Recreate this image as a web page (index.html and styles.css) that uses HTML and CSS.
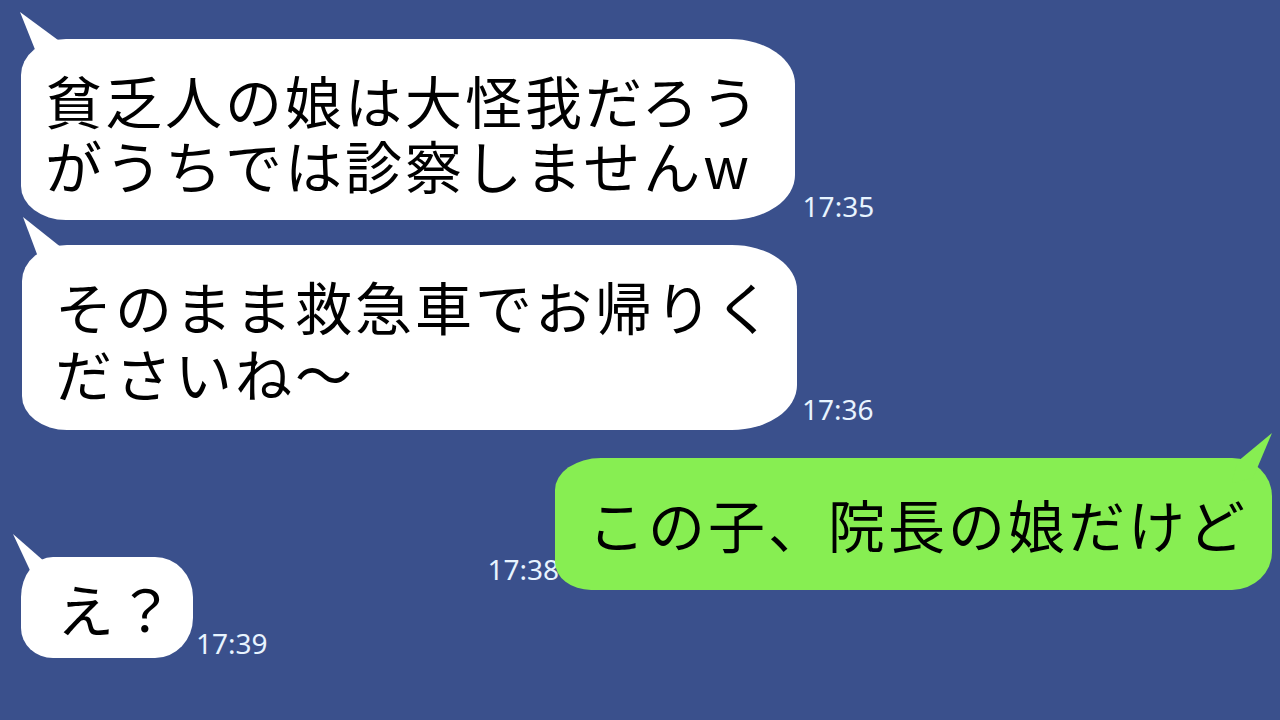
FILE: index.html
```html
<!DOCTYPE html>
<html lang="ja">
<head>
<meta charset="utf-8">
<link rel="stylesheet" href="styles.css">
</head>
<body>
<div class="chat">
  <div class="row row-left row-1">
    <div class="bubble white b1">貧乏人の娘は大怪我だろう<br>がうちでは診察しませんw</div>
    <span class="time t1">17:35</span>
  </div>
  <div class="row row-left row-2">
    <div class="bubble white b2">そのまま救急車でお帰りく<br>ださいね〜</div>
    <span class="time t2">17:36</span>
  </div>
  <div class="row row-right row-3">
    <span class="time t3">17:38</span>
    <div class="bubble green b3">この子、院長の娘だけど</div>
  </div>
  <div class="row row-left row-4">
    <div class="bubble white b4">え？</div>
    <span class="time t4">17:39</span>
  </div>
</div>
</body>
</html>
```
FILE: styles.css
```css
html, body {
  margin: 0;
  padding: 0;
}
body {
  width: 1280px;
  height: 720px;
  overflow: hidden;
  background: #3a508c;
}
.chat {
  display: flex;
  flex-direction: column;
  padding-top: 39px;
}
.row {
  display: flex;
  align-items: flex-end;
}
.row-left {
  padding-left: 21px;
}
.row-right {
  justify-content: flex-end;
  padding-right: 8px;
}
.row-2 { margin-top: 25px; }
.row-3 { margin-top: 28px; }
.row-4 { margin-top: -33px; }

.bubble {
  position: relative;
  font-family: "Noto Sans CJK JP", "Noto Sans", sans-serif;
  font-size: 57px;
  letter-spacing: 3px;
  line-height: 65px;
  color: #000;
  white-space: nowrap;
}
.white { background: #fff; }
.green { background: #87ee52; }

.bubble::before {
  content: "";
  position: absolute;
  width: 80px;
  height: 80px;
  background: inherit;
}
.white::before {
  left: -10px;
  top: -40px;
}
.green::before {
  right: -10px;
  top: -40px;
}

.b1 {
  padding: 28px 33px 23px 24px;
  border-radius: 45px 65px 65px 45px / 36px 45px 45px 34px;
}
.b1::before {
  clip-path: polygon(9px 13px, 47px 41px, 52px 62px, 27px 58px);
}
.b2 {
  margin-left: 1px;
  line-height: 67px;
  padding: 27px 22px 24px 33px;
  border-radius: 45px 65px 65px 45px / 36px 45px 45px 34px;
}
.b2::before {
  clip-path: polygon(11px 12px, 50px 43px, 54px 62px, 28px 57px);
}
.b3 {
  padding: 33px 24px 34px 33px;
  border-radius: 46px 40px 40px 36px / 32px 38px 38px 28px;
}
.b3::before {
  clip-path: polygon(70px 15px, 35px 44px, 30px 65px, 51px 60px);
}
.b4 {
  padding: 18px 16px 18px 36px;
  border-radius: 32px 38px 38px 32px / 40px 40px 40px 30px;
}
.b4::before {
  clip-path: polygon(2px 17px, 34px 45px, 45px 65px, 24px 64px);
}

.time {
  font-family: "Noto Sans", "Liberation Sans", sans-serif;
  font-size: 28px;
  line-height: 28px;
  color: #e8f4ff;
  white-space: nowrap;
}
.t1 { margin-left: 8px; margin-bottom: 0; }
.t2 { margin-left: 5px; margin-bottom: 7px; }
.t3 { margin-right: -4px; margin-bottom: 7px; }
.t4 { margin-left: 3px; margin-bottom: 1px; }
```
